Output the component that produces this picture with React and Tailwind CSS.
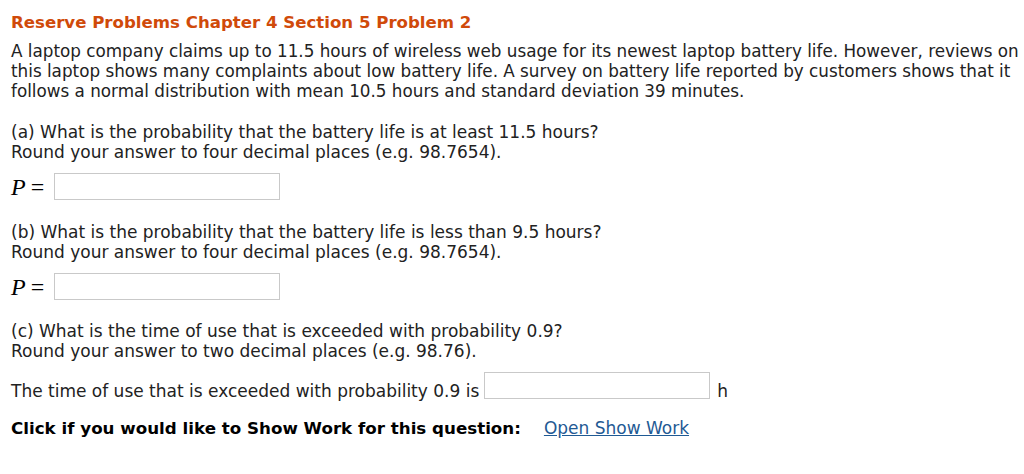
export default function App() {
  return (
    <div className="min-h-screen bg-white pl-[11px] pt-[13px] text-[17px] leading-[20px] text-[#222]" style={{ fontFamily: '"DejaVu Sans", Verdana, sans-serif' }}>
      <h1 className="text-[16.6px] font-bold text-[#d04a0a]">Reserve Problems Chapter 4 Section 5 Problem 2</h1>
      <p className="mt-[8px] whitespace-nowrap text-[16.8px]">
        <span className="block">A laptop company claims up to 11.5 hours of wireless web usage for its newest laptop battery life. However, reviews on</span>
        <span className="block">this laptop shows many complaints about low battery life. A survey on battery life reported by customers shows that it</span>
        <span className="block">follows a normal distribution with mean 10.5 hours and standard deviation 39 minutes.</span>
      </p>

      <div className="mt-[21px]">
        <p>(a) What is the probability that the battery life is at least 11.5 hours?</p>
        <p>Round your answer to four decimal places (e.g. 98.7654).</p>
        <div className="mt-[11px] flex items-center gap-[10px]">
          <span className="flex items-center gap-[5px] text-[24px] text-black" style={{ fontFamily: '"Liberation Serif", serif' }}>
            <i>P</i>
            <span>=</span>
          </span>
          <input className="h-[27px] w-[226px] border border-[#c9c9c9] outline-none" />
        </div>
      </div>

      <div className="mt-[22px]">
        <p>(b) What is the probability that the battery life is less than 9.5 hours?</p>
        <p>Round your answer to four decimal places (e.g. 98.7654).</p>
        <div className="mt-[11px] flex items-center gap-[10px]">
          <span className="flex items-center gap-[5px] text-[24px] text-black" style={{ fontFamily: '"Liberation Serif", serif' }}>
            <i>P</i>
            <span>=</span>
          </span>
          <input className="h-[27px] w-[226px] border border-[#c9c9c9] outline-none" />
        </div>
      </div>

      <div className="mt-[21px]">
        <p>(c) What is the time of use that is exceeded with probability 0.9?</p>
        <p>Round your answer to two decimal places (e.g. 98.76).</p>
        <div className="mt-[11px] flex items-start">
          <span className="mt-[9px]">The time of use that is exceeded with probability 0.9 is</span>
          <input className="ml-[5px] h-[27px] w-[226px] border border-[#c9c9c9] outline-none" />
          <span className="ml-[7px] mt-[9px]">h</span>
        </div>
      </div>

      <div className="mt-[17px] flex">
        <span className="text-[16.7px] font-bold text-black">Click if you would like to Show Work for this question:</span>
        <a href="#" className="ml-[23px] text-[#1f5a94] underline">Open Show Work</a>
      </div>
    </div>
  );
}
